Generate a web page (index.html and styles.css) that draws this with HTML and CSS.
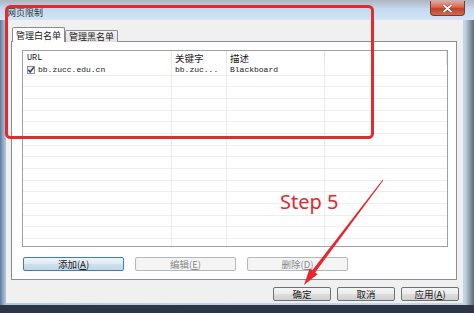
FILE: index.html
```html
<!DOCTYPE html>
<html lang="zh-CN">
    <head>
        <meta charset="UTF-8">
        <meta name="viewport" content="width=device-width, initial-scale=1.0">
        <title>网页限制</title>
        <link rel="stylesheet" href="styles.css">
    </head>
    <body>
        <div class="window">
            <div class="titlebar">
                <span class="title">网页限制</span>
                <span class="close">
                    <svg width="11" height="9" viewBox="0 0 11 9">
                        <path d="M1.5 1 L9.5 8 M9.5 1 L1.5 8" stroke="#5a1a10" stroke-width="3" stroke-opacity="0.5"/>
                        <path d="M1.5 1 L9.5 8 M9.5 1 L1.5 8" stroke="#fff" stroke-width="1.8"/>
                    </svg>
                </span>
            </div>

            <div class="client">
                <div class="tabs">
                    <div class="tab active">管理白名单</div>
                    <div class="tab">管理黑名单</div>
                </div>

                <div class="panel">
                    <div class="list">
                        <div class="list-head">
                            <div class="col">URL</div>
                            <div class="col">关键字</div>
                            <div class="col">描述</div>
                            <div class="col"></div>
                        </div>
                        <div class="list-body">
                            <div class="row">
                                <div class="col">
                                    <span class="check">
                                        <svg width="8" height="8" viewBox="0 0 8 8">
                                            <path d="M1.3 3.8 L3.2 6 L6.8 1.3" fill="none" stroke="#2f4574" stroke-width="1.5"/>
                                        </svg>
                                    </span>
                                    <span class="mono">bb.zucc.edu.cn</span>
                                </div>
                                <div class="col"><span class="mono">bb.zuc...</span></div>
                                <div class="col"><span class="mono">Blackboard</span></div>
                            </div>
                        </div>
                    </div>

                    <div class="list-buttons">
                        <button class="btn default">添加(<u>A</u>)</button>
                        <button class="btn" disabled>编辑(<u>E</u>)</button>
                        <button class="btn" disabled>删除(<u>D</u>)</button>
                    </div>
                </div>

                <div class="dialog-buttons">
                    <button class="btn">确定</button>
                    <button class="btn">取消</button>
                    <button class="btn">应用(<u>A</u>)</button>
                </div>
            </div>
        </div>

        <!-- red annotation drawn over the screenshot -->
        <svg class="annotations" width="474" height="313" viewBox="0 0 474 313">
            <rect x="6.5" y="6.5" width="366" height="131" rx="4" fill="none" stroke="#e32b2b" stroke-width="3"/>
            <polygon points="382.6,179.7 383.4,180.3 315.1,272.4 317.7,274.3 304,285 309.7,268.3 312.3,270.2" fill="#e8262d"/>
        </svg>
        <div class="step">Step 5</div>
    </body>
</html>
```

FILE: styles.css
```css
body {
    margin: 0;
    width: 474px;
    height: 313px;
    overflow: hidden;
    background-color: #2c3646;
    font-family: "Noto Sans CJK SC", "Liberation Sans", sans-serif;
    font-size: 9.5px;
    color: #1a1a1a;
    position: relative;
}

.window {
    height: 305px;
    display: flex;
    flex-direction: column;
    background: linear-gradient(to right, #5f7896 0, #8ea7c4 3px, #b4c8de 6px, #c3d3e4 50%, #c6d4e2 calc(100% - 9px), #94a5b6 calc(100% - 5px), #5d6976 100%);
}

.titlebar {
    height: 20px;
    flex: none;
    display: flex;
    justify-content: space-between;
    align-items: flex-start;
    background: linear-gradient(to bottom, #aeb6bf 0, #b9c9da 5px, #c4daf0 9px, #d3e4f5 20px);
}

.title {
    margin: 7px 0 0 7px;
    font-size: 9px;
    line-height: 12px;
    color: #333;
}

.close {
    width: 35px;
    height: 15px;
    margin: 1px 9px 0 0;
    box-sizing: border-box;
    border: 1px solid #7a3a2e;
    border-top: none;
    border-radius: 0 0 4px 4px;
    background: linear-gradient(to bottom, #e9a493 0, #d8654f 45%, #c2402a 55%, #cf6a52 100%);
    display: flex;
    align-items: center;
    justify-content: center;
}

.client {
    flex: 1;
    margin: 0 11px 2px 6px;
    padding: 7px 4px 2px 5px;
    background-color: #f0f0f0;
    display: flex;
    flex-direction: column;
}

.tabs {
    display: flex;
    align-items: flex-end;
    padding-left: 2px;
    height: 15px;
    margin-bottom: -1px;
    position: relative;
    z-index: 1;
}

.tab {
    height: 12px;
    box-sizing: border-box;
    padding: 0 3px;
    border: 1px solid #898c95;
    border-bottom: none;
    border-radius: 2px 2px 0 0;
    background: linear-gradient(to bottom, #f3f3f3, #e3e3e3);
    font-size: 9px;
    line-height: 11px;
    margin-left: -1px;
}

.tab.active {
    height: 15px;
    width: 53px;
    padding: 2px 0 0 3px;
    background: #fff;
    margin-right: 1px;
}

.panel {
    height: 239px;
    box-sizing: border-box;
    margin-right: 2px;
    border: 1px solid #898c95;
    background-color: #fff;
    padding: 8px 8px 8px 10px;
    display: flex;
    flex-direction: column;
}

.list {
    height: 197px;
    box-sizing: border-box;
    border: 1px solid #9ea2a8;
    display: flex;
    flex-direction: column;
}

.list-head,
.row {
    display: grid;
    grid-template-columns: 149px 55px 98px 1fr;
}

.list-head {
    height: 13px;
    line-height: 14px;
    flex: none;
}

.list-head .col {
    border-right: 1px solid #e3e5e8;
    padding-left: 3px;
}

.list-head .col:first-child,
.row .col:first-child {
    padding-left: 4px;
}

.list-head .col:first-child {
    font-family: "Liberation Mono", monospace;
    font-size: 8.5px;
}

.list-body {
    flex: 1;
    background:
        linear-gradient(to right, transparent 148px, #ececec 148px, #ececec 149px, transparent 149px, transparent 203px, #ececec 203px, #ececec 204px, transparent 204px, transparent 301px, #ececec 301px, #ececec 302px, transparent 302px),
        repeating-linear-gradient(to bottom, transparent 0, transparent 10.67px, #efefef 10.67px, #efefef 11.67px);
}

.row {
    height: 11.67px;
    line-height: 11px;
}

.row .col {
    padding-left: 3px;
    display: flex;
    align-items: center;
}

.mono {
    font-family: "Liberation Mono", monospace;
    font-size: 8px;
}

.check {
    width: 8px;
    height: 8px;
    box-sizing: border-box;
    border: 1px solid #8f8f8f;
    background: linear-gradient(to bottom right, #e2e2e2, #fdfdfd);
    margin-right: 3px;
    display: flex;
    align-items: center;
    justify-content: center;
}

.check svg {
    flex: none;
}

.list-buttons {
    display: flex;
    gap: 11px;
    margin-top: 10px;
    padding-left: 1px;
}

.list-buttons .btn {
    width: 101px;
}

.dialog-buttons {
    display: flex;
    justify-content: flex-end;
    gap: 6px;
    margin-top: 7px;
}

.dialog-buttons .btn {
    width: 58px;
}

.btn {
    height: 14px;
    box-sizing: border-box;
    padding: 0;
    border: 1px solid #707070;
    border-radius: 2px;
    background: linear-gradient(to bottom, #f4f4f4 0, #ebebeb 50%, #dddddd 51%, #cfcfcf 100%);
    font-family: "Noto Sans CJK SC", "Liberation Sans", sans-serif;
    font-size: 9.5px;
    line-height: 12px;
    color: #1a1a1a;
}

.btn.default {
    border-color: #3c7fb1;
    background: linear-gradient(to bottom, #eef5fa 0, #dde9f2 50%, #cfdfeb 51%, #c2d6e6 100%);
}

.btn:disabled {
    border-color: #b5b9bc;
    background: #f4f4f4;
    color: #8a8a8a;
}

.annotations {
    position: absolute;
    left: 0;
    top: 0;
    pointer-events: none;
}

.step {
    position: absolute;
    left: 280px;
    top: 192px;
    font-family: "Noto Sans", sans-serif;
    font-size: 20px;
    line-height: 20px;
    color: #e8262d;
}
```
